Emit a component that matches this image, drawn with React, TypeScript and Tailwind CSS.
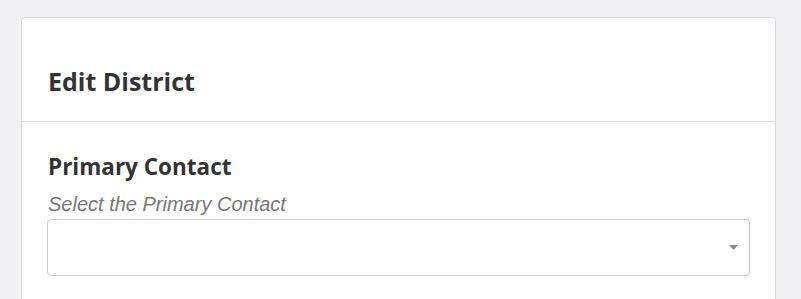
export default function App() {
  return (
    <div className="bg-[#f0f0f2] pl-[21px] pr-[25px] pt-[17px] overflow-hidden h-[299px]">
      <div className="bg-white border border-[#dddddd] rounded-[4px] h-[400px]">
        <div className="border-b border-[#dddddd] h-[104px] px-[26px] pt-[51px]">
          <h2 className="text-[25px] font-bold text-[#333333] leading-[25px]" style={{ fontFamily: '"Open Sans", sans-serif' }}>
            Edit District
          </h2>
        </div>
        <div className="px-[25px] pt-[30px]">
          <div className="text-[22.5px] font-bold text-[#333333] leading-[30px] pl-px" style={{ fontFamily: '"Open Sans", sans-serif' }}>
            Primary Contact
          </div>
          <div className="text-[20px] italic text-[#777777] leading-[24px] mt-[10px] pl-px" style={{ fontFamily: '"Liberation Sans", Arial, sans-serif' }}>
            Select the Primary Contact
          </div>
          <div className="h-[57px] mt-[3px] border border-[#cccccc] rounded-[4px] flex items-center justify-end pr-[11px]">
            <svg width="9" height="5" viewBox="0 0 9 5">
              <polygon points="0,0 9,0 4.5,5" fill="#888888" />
            </svg>
          </div>
        </div>
      </div>
    </div>
  );
}
